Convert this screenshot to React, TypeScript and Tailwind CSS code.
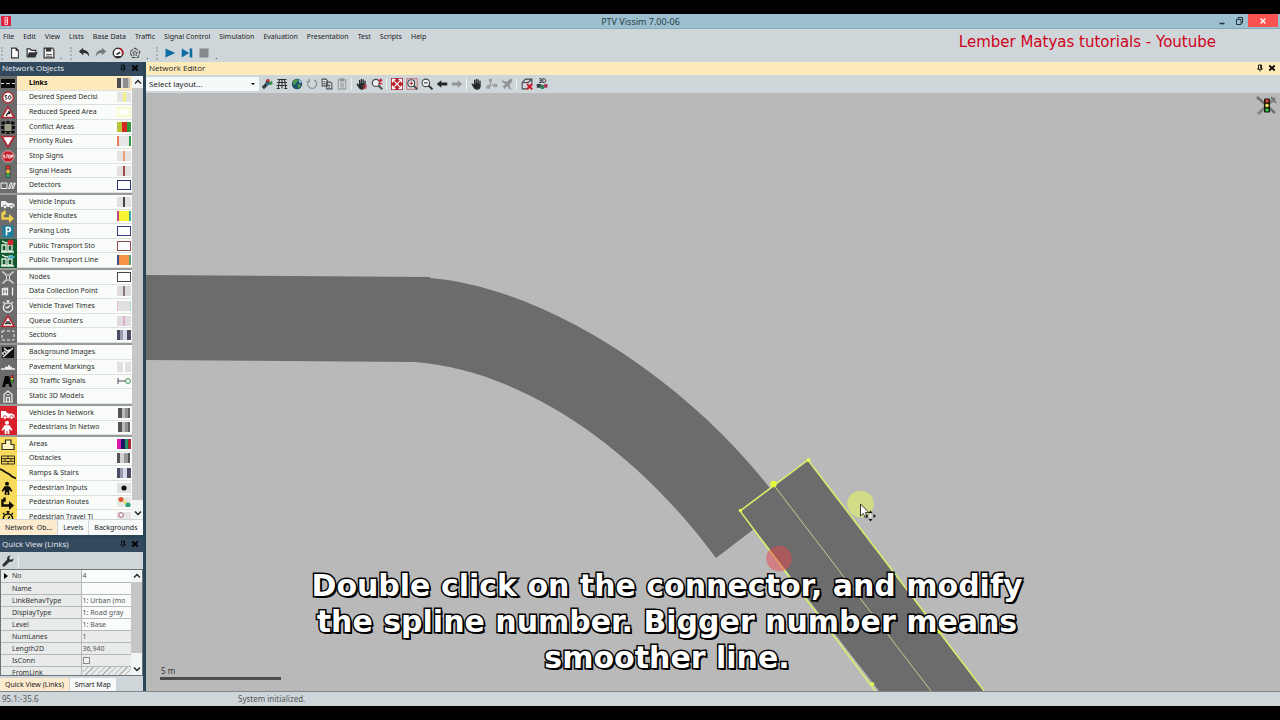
import React, { useState } from "react";

type IconProps = { name: string; className?: string };

const GLYPHS: Record<string, React.ReactNode> = {
  newFile: <path d="M3.500 1.500h6l3 3v10h-9zM9.500 1.500v3h3" fill="#fff" stroke="#333" strokeWidth="1.400" />,
  open: (
    <g>
      <path d="M1.500 13V2.500h4l1.500 2h6V7" fill="#fff" stroke="#333" strokeWidth="1.600" />
      <path d="M1 14 4 7h11.500l-3 7z" fill="#333" />
    </g>
  ),
  save: (
    <g>
      <path d="M1.500 1.500h11l2 2v11h-13z" fill="#f3f3f3" stroke="#333" strokeWidth="1.600" />
      <path d="M4 1.500h7V6H4z" fill="#333" />
      <path d="M4 10h8M4 12.300h8" stroke="#555" strokeWidth="1.200" />
    </g>
  ),
  undo: <path d="M1 6 7 1v3c5 0 8 3 8 9-2-4-4-5-8-5v3z" fill="#2f3336" />,
  redo: <path d="M15 6 9 1v3C4 4 1 7 1 13c2-4 4-5 8-5v3z" fill="#777c7f" />,
  gauge: (
    <g fill="none">
      <circle cx="8" cy="8" r="6.300" fill="#fff" stroke="#333" strokeWidth="2" />
      <path d="M10 2a6.300 6.300 0 0 1 4 8" stroke="#c01525" strokeWidth="2.200" />
      <path d="M4 13h8M6 10l5-3" stroke="#333" strokeWidth="2" />
    </g>
  ),
  star: (
    <g fill="none" stroke="#444">
      <path d="m8 1.500 6.500 4.800-2.500 7.700H4L1.500 6.300z" strokeWidth="1.500" strokeDasharray="5 1.500" />
      <path d="m8 5 1 2.200 2.400.2-1.800 1.600.6 2.400L8 10.200l-2.200 1.200.6-2.400-1.800-1.600L7 7.200z" strokeWidth="1" />
    </g>
  ),
  play: <path d="m2 2 13 6-13 6z" fill="#0d6da3" />,
  step: <path d="m1 2 10 6-10 6zM11.500 2H15v12h-3.500z" fill="#0d6da3" />,
  stop: <path d="M2 2h12v12H2z" fill="#858789" />,
  pin: <path d="M5 2h6v7h1.500v1.500h-9V9H5zM8 10v5M9.500 2v7" fill="none" stroke="currentColor" strokeWidth="1.800" />,
  close: <path d="m2.500 3 11 10m0-10-11 10" stroke="currentColor" strokeWidth="3.400" />,
  wrench: (
    <path d="M15 4.500 12 6.500 9.800 5 10 2 12.500.8C9 0 6 2.500 7 6L1 12.300a2 2 0 0 0 2.800 2.800L10 9c3.500.8 5.800-1.500 5-4.500z" fill="#2d3033" />
  ),
  wrenchColor: (
    <g>
      <path d="M15 4 12 6 10 4.500 10.500 2C8 1 6 3 6.500 6L1 12l3 3 6-6c3 .5 5.500-2 5-5z" fill="#33413c" />
      <circle cx="9.500" cy="3.500" r="2.300" fill="#b03a3a" />
      <circle cx="13" cy="7" r="2.300" fill="#2c9a4c" />
      <circle cx="8.500" cy="8" r="1.800" fill="#2c7ea8" />
    </g>
  ),
  net: (
    <path d="M2 2h12M1.500 6h13M1 10h14M4.500 2 3 14M8 2v12M11.500 2 13 14M1 14h4M11 14h4" stroke="#2f3133" strokeWidth="1.400" fill="none" />
  ),
  globe: (
    <g>
      <circle cx="8" cy="8" r="7" fill="#21506e" />
      <path d="M3 4c3-3 6-2 6 0s-3 2-3 4-3 1-4-1zM9 9c3-2 5 0 4 2s-4 3-4 0z" fill="#4f9b4f" />
      <path d="M10 2c3 1 4 3 4 5l-3-1z" fill="#a9cfe0" />
    </g>
  ),
  refresh: <path d="M11 2.500A6 6 0 1 1 4 3.500M4.500 1v4H.8" fill="none" stroke="#8d9295" strokeWidth="1.600" />,
  copy: (
    <g fill="#e9ecec" stroke="#45494c" strokeWidth="1.400">
      <path d="M1.500 1.500h5l2 2v7h-7zM7.500 5.500h5l2 2v7h-7z" />
      <path d="M3 5h3M3 7.500h3M9.500 9.500h3M9.500 12h3" />
    </g>
  ),
  paste: (
    <g fill="none" stroke="#96999b" strokeWidth="1.400">
      <path d="M3 2.500h10v12H3zM6 1h4v3H6zM5.500 7h5M5.500 9.500h5M5.500 12h5" />
    </g>
  ),
  hand: (
    <path d="M4 9V3.200c0-1 1.700-1 1.700 0V7h.6V1.800c0-1 1.800-1 1.800 0V7h.6V2.300c0-1 1.800-1 1.800 0V7.500h.6V4c0-1 1.800-1 1.800 0v7c0 3-2 4.500-4.800 4.500-2.700 0-4.200-1.500-5.200-3.500L.8 8.500c-.5-1 1-1.700 1.700-1z" fill="#26292b" />
  ),
  handRed: (
    <g>
      <path d="M4 9V3.200c0-1 1.700-1 1.700 0V7h.6V1.800c0-1 1.800-1 1.800 0V7h.6V2.300c0-1 1.800-1 1.800 0V7.500h.6V4c0-1 1.800-1 1.800 0v7c0 3-2 4.500-4.800 4.500-2.700 0-4.200-1.500-5.200-3.500L.8 8.500c-.5-1 1-1.700 1.700-1z" fill="#26292b" />
      <path d="M9 10.500h5m-1.500-1.500L14 10.500 12.500 12M14 13.500H9" fill="none" stroke="#c8434e" strokeWidth="1.500" />
    </g>
  ),
  zoomSync: (
    <g fill="none">
      <circle cx="6.500" cy="6.500" r="4.800" fill="#eef2f2" stroke="#44484a" strokeWidth="1.600" />
      <path d="m10 10 5 5" stroke="#44484a" strokeWidth="2.400" />
      <path d="M9 3h5m-2-2 2.500 2L12 5M15 7.500h-5" stroke="#c6222e" strokeWidth="1.500" />
    </g>
  ),
  fit: (
    <g>
      <path d="M0 0h16v16H0z" fill="#b3202b" />
      <path d="m2.500 2.500 11 11m0-11-11 11" stroke="#fff" strokeWidth="1.600" />
      <path d="M2 6V2h4M10 2h4v4M14 10v4h-4M6 14H2v-4" fill="none" stroke="#fff" strokeWidth="1.800" />
    </g>
  ),
  zoomIn: (
    <g fill="none">
      <path d="M1 1h14v14H1z" stroke="#c6626a" strokeWidth="1.200" />
      <circle cx="7" cy="7" r="4.600" fill="#eef2f2" stroke="#44484a" strokeWidth="1.500" />
      <path d="m10.500 10.500 4.500 4.500" stroke="#44484a" strokeWidth="2.400" />
      <path d="M4.500 7h5M7 4.500v5" stroke="#b3202b" strokeWidth="1.300" />
    </g>
  ),
  zoomOut: (
    <g fill="none">
      <circle cx="6.500" cy="6.500" r="5" fill="#eef2f2" stroke="#44484a" strokeWidth="1.500" />
      <path d="m10.200 10.200 5 5" stroke="#333" strokeWidth="2.600" />
      <path d="M4 6.500h5" stroke="#444" strokeWidth="1.500" />
    </g>
  ),
  back: <path d="m1 8 6-5v3h8v4H7v3z" fill="#24282a" />,
  forward: <path d="M15 8 9 3v3H1v4h8v3z" fill="#919598" />,
  axis: (
    <g fill="none" stroke="#96999b" strokeWidth="1.500">
      <path d="M6 2v7l-4 4M6 9l8 1" />
      <circle cx="6" cy="3" r="1.500" />
      <circle cx="3" cy="12" r="2" />
      <circle cx="12.500" cy="10" r="2" />
    </g>
  ),
  plane: (
    <g>
      <path d="M15 1 11 2 8 5 2 4 1 5l5 3-3 3-2 .5 3 1 1 3 .5-2 3-3 3 5 1-1-1-6 3-3z" fill="#8f9395" />
      <path d="m1 2 13 13" stroke="#8f9395" strokeWidth="1.200" />
    </g>
  ),
  cubeX: (
    <g fill="none">
      <path d="M1.500 6 6 1.500h8.500V8M1.500 6h8M1.500 6v8.500H8M9.500 6l5-4.500" stroke="#44484a" strokeWidth="1.400" />
      <path d="m8 8 7 7m0-7-7 7" stroke="#cc1b29" strokeWidth="2.600" />
    </g>
  ),
  view3d: (
    <g>
      <path d="M4 1h3v5H4M5 3.500h2M9 1h2c2.500 0 2.500 5 0 5H9z" fill="none" stroke="#333" strokeWidth="1.200" />
      <path d="M1 8h6v5H1z" fill="#3a3f4b" />
      <circle cx="8.500" cy="12" r="3" fill="#2f8a58" />
      <circle cx="13" cy="10.500" r="2.700" fill="#a83a5a" />
    </g>
  ),
};

function Icon({ name, className = "size-3" }: IconProps) {
  return (
    <svg viewBox="0 0 16 16" className={className} aria-hidden="true">
      {GLYPHS[name]}
    </svg>
  );
}

const P = "#efefef";

const OBJECT_GLYPHS: Record<string, React.ReactNode> = {
  links: (
    <g>
      <path d="M1 3h14v9H1z" fill="#0c0c0c" />
      <path d="M1 7.500h3m2 0h4m2 0h3" stroke="#ddd" />
    </g>
  ),
  speed: (
    <g>
      <circle cx="8" cy="7.500" r="5.400" fill="#fff" stroke="#b5323a" strokeWidth="1.500" />
      <path d="M7 5.500H5.300v1.600c2.400-.3 2.400 2.600 0 2.200M9.800 5.400c-1.600 0-1.600 4 0 4s1.600-4 0-4z" fill="none" stroke="#222" />
    </g>
  ),
  reduced: (
    <g>
      <path d="M8 1.800 14.300 12.500H1.700z" fill="#fff" stroke="#b02832" strokeWidth="1.600" />
      <path d="M6.500 11c0-2 1-3 3-3.500M8 6.500l2 .8-1.200 2" stroke="#111" strokeWidth="1.200" fill="none" />
    </g>
  ),
  conflict: (
    <g>
      <path d="M1.500 1.500H5v3H1.500zM6.500 1h3v3h-3zM11 1.500h3.500v3H11zM1 6h3v3H1zM12 6h3v3h-3zM1.500 10.500H5v3H1.500zM6.500 11h3v3h-3zM11 10.500h3.500v3H11z" fill="#0c0c0c" />
      <path d="M4 3.500h8v8H4z" fill="#98a08c" stroke="#222" />
    </g>
  ),
  priority: <path d="M1.800 2.500h12.400L8 13z" fill="#fff" stroke="#b02832" strokeWidth="1.700" />,
  stopSign: (
    <g>
      <path d="M5.500 2h5l3.500 3.300v4.400L10.500 13h-5L2 9.700V5.300z" fill="#c4202c" stroke="#eee" strokeWidth=".6" />
      <path d="M5 6H3.500v1.500H5V9H3.500M6 6h2M7 6v3M8.700 6h1.500v3H8.700zM11.500 9V6H13v1.500h-1.500" stroke="#fff" strokeWidth=".8" fill="none" />
    </g>
  ),
  signal: (
    <g>
      <path d="M5.500 1h5v13h-5z" fill="#444" />
      <circle cx="8" cy="3.500" r="1.900" fill="#cf2f2f" />
      <circle cx="8" cy="7.500" r="1.900" fill="#e2c63a" />
      <circle cx="8" cy="11.500" r="1.900" fill="#30a54c" />
    </g>
  ),
  detectors: <path d="M1 5h6v5.500H1zM8.500 10.500l2-5.500H12l-2 5.500zM11.800 10.500l2-5.500h1.500l-2 5.500z" fill="none" stroke={P} />,
  car: (
    <g>
      <path d="M1 6h4.500L8 8h4l2.500 1.500V12H1z" fill={P} />
      <circle cx="5" cy="12" r="1.800" fill={P} stroke="#666" strokeWidth=".7" />
      <circle cx="11.500" cy="12" r="1.800" fill={P} stroke="#666" strokeWidth=".7" />
    </g>
  ),
  route: (
    <g>
      <path d="M4.500 1.500v3H2.500v5H10" fill="none" stroke="#f0cf4e" strokeWidth="2.400" />
      <path d="m9 5 5 4.500L9 14z" fill="#f0cf4e" />
    </g>
  ),
  parking: (
    <g>
      <path d="M2.500 1.500h11v12h-11z" fill="#1d7f9d" />
      <path d="M6.500 11.500v-8h2c2.500 0 2.500 4 0 4h-2" fill="none" stroke="#fff" strokeWidth="1.600" />
    </g>
  ),
  ptStop: (
    <g>
      <path d="M2 2l4 2 5-1M2 6h4v6H2zM8 6h4v6H8zM1 13h13" fill="none" stroke="#e4efe4" strokeWidth="1.300" />
      <circle cx="10.500" cy="3.500" r="3" fill="#c82a2d" />
    </g>
  ),
  ptLine: (
    <g>
      <path d="M2 2l4 2 5-1M2 6h4v6H2zM8 6h4v6H8zM1 13h13" fill="none" stroke="#e4efe4" strokeWidth="1.300" />
      <path d="M8 4h5m-2-2 3 2-3 2" fill="none" stroke="#4fb4cb" strokeWidth="1.300" />
    </g>
  ),
  nodes: <path d="M2 1.500 6.500 6v3L2 13.500M14 1.500 9.500 6v3l4.500 4.500M3 1.500 7 5h2l4-3.500M3 13.500 7 10h2l4 3.500" fill="none" stroke={P} strokeWidth=".9" />,
  dataPoint: <path d="M2.500 4v7.500M5 3.500v8M7.500 3.500v8M2 5h6M2 10h6M12.500 3.500v8" stroke={P} strokeWidth="1.300" />,
  timer: (
    <g fill="none" stroke={P} strokeWidth="1.300">
      <circle cx="8" cy="8.500" r="4.600" />
      <path d="M6.500 1.800h3M8 2v2M3 3l1.500 1.500M13 3l-1.500 1.500M8 8.500l2-2M5.500 8.500H8" />
    </g>
  ),
  queue: (
    <g>
      <path d="M8 1.800 14.300 12.500H1.700z" fill="#fff" stroke="#b02832" strokeWidth="1.600" />
      <path d="M5 9.500h6M6 7.800h4" stroke="#333" strokeWidth="1.300" />
    </g>
  ),
  sections: <path d="M2 3h12v9H2z" fill="none" stroke={P} strokeDasharray="3 2" />,
  background: (
    <g>
      <path d="M2 2h12v11H2z" fill="#111" />
      <path d="M3 12 13 3M4 3l3 3 3-1M4 6l2 2M3 10V7" stroke="#eee" strokeWidth="1.500" fill="none" />
    </g>
  ),
  pavement: <path d="M1 9h14M5 7.500h7M9 5v3" stroke={P} strokeWidth="1.700" />,
  signal3d: (
    <g>
      <path d="M5 2h4l3 11H9.500l-.8-3H6l-.8 3H2z" fill="#080808" />
      <path d="M10.500 1h3v8h-3z" fill="#2b2b2b" />
      <circle cx="12" cy="2.400" r="1.200" fill="#d33" />
      <circle cx="12" cy="5" r="1.200" fill="#dc3" />
      <circle cx="12" cy="7.600" r="1.200" fill="#3a4" />
    </g>
  ),
  house: <path d="M4 13V5.500L8 2l4 3.500V13zM6.500 13V8.500h3V13M6.500 6h3" fill="none" stroke={P} strokeWidth="1.200" />,
  carRed: (
    <g>
      <path d="M1 5h4.500L8 7.500h4l2.500 1.500v3H1z" fill="#fff" />
      <circle cx="5" cy="11.500" r="1.800" fill="#fff" stroke="#d8202c" strokeWidth=".8" />
      <circle cx="11.500" cy="11.500" r="1.800" fill="#fff" stroke="#d8202c" strokeWidth=".8" />
    </g>
  ),
  personWhite: (
    <g fill="#fff">
      <circle cx="7" cy="2.800" r="2" />
      <path d="M4.500 5.300h5L12.500 10l-1.300.8L9.300 8.500V14H7.500v-3h-1v3H4.700V8.500l-1.900 2.300L1.500 10z" />
    </g>
  ),
  area: <path d="M2 12.500v-6h3.500V3H11v4.500h3v5z" fill="#fdf3c4" stroke="#33301e" strokeWidth="1.200" />,
  brick: <path d="M1.500 4h13v8h-13zM1.500 6.600h13M1.500 9.300h13M8 4v2.600M5 6.600v2.700M11 6.600v2.700M8 9.300V12" fill="none" stroke="#33301e" />,
  ramp: <path d="m0 3 3 1.500 3 2 3 1.500 3 2.500 4 2" fill="none" stroke="#15130a" strokeWidth="1.800" />,
  person: (
    <g fill="#0d0c06">
      <circle cx="7" cy="2.800" r="2" />
      <path d="M4.500 5.300h5L12.500 10l-1.300.8L9.300 8.500V14H7.500v-3h-1v3H4.700V8.500l-1.900 2.300L1.500 10z" />
    </g>
  ),
  pedRoute: (
    <g>
      <path d="M4.500 1.500v3H2.500v5H10" fill="none" stroke="#0d0c06" strokeWidth="2.400" />
      <path d="m9 5 5 4.500L9 14z" fill="#0d0c06" />
    </g>
  ),
  pedTimer: (
    <g fill="none" stroke="#0d0c06" strokeWidth="1.500">
      <circle cx="8" cy="8.500" r="4.600" />
      <path d="M6.500 1.800h3M8 2v2M3 3l1.500 1.500M13 3l-1.500 1.500M8 8.500l2-2" />
    </g>
  ),
};

const bars = (...list: [number, number, string][]) => list.map(([x, w, c], i) => <rect key={i} x={x} y="0" width={w} height="10" fill={c} />);
const frame = (c: string) => <rect x=".5" y=".5" width="13" height="9" fill="#fcfdff" stroke={c} />;

const SWATCHES: Record<string, React.ReactNode> = {
  links: bars([0, 4, "#4b4b4b"], [4, 2, "#dcdcdc"], [6, 5, "#8d8d8d"], [11, 2, "#c0c0c0"]),
  speed: bars([0, 14, "#e4e4e0"], [6, 3, "#eff08a"]),
  reduced: <rect x="1" y="1" width="12" height="8" fill="#fffffa" stroke="#f8f8b8" strokeWidth="1.500" />,
  conflict: bars([0, 5, "#b9c43a"], [5, 5, "#d32a20"], [10, 4, "#2c9a3d"]),
  priority: bars([0, 14, "#e6e6e6"], [0, 2, "#e8795d"], [12, 2, "#2f9a48"]),
  stopSign: bars([0, 14, "#e6e4e2"], [6, 2, "#ee9d75"]),
  signal: bars([0, 14, "#e4e0e0"], [6, 2, "#9e4a4f"]),
  detectors: frame("#2c3370"),
  inputs: bars([0, 14, "#e0e0e0"], [6, 2, "#444"]),
  routes: bars([0, 2, "#c4487f"], [2, 10, "#f7f531"], [12, 2, "#3fa890"]),
  parking: frame("#3a3a86"),
  ptStop: frame("#8a4c50"),
  ptLine: bars([0, 2, "#44488d"], [2, 10, "#f79443"], [12, 2, "#5a9c7c"]),
  nodes: frame("#4a4348"),
  dataPoint: bars([0, 14, "#e0dcdc"], [6, 2, "#86777b"]),
  travel: bars([0, 14, "#e0e0e0"], [0, 1, "#f0bcc8"], [13, 1, "#a9dcc6"]),
  queue: bars([0, 14, "#e2dce0"], [6, 2, "#dfaecb"]),
  sections: bars([0, 14, "#4b4c62"], [3, 3, "#9a9bb0"], [6, 4, "#d7d8e2"]),
  pavement: bars([0, 6, "#e0e0e0"], [8, 6, "#e0e0e0"]),
  signal3d: (
    <g fill="none">
      <path d="M1 2v6M1 5h8" stroke="#5a4660" />
      <circle cx="11" cy="5" r="2.500" stroke="#3a9a58" />
    </g>
  ),
  vehicles: bars([1, 4, "#555"], [5, 3, "#b9b9b9"], [8, 3, "#8f8f8f"], [11, 2, "#5e5e5e"]),
  areas: bars([0, 4, "#d817b0"], [4, 4, "#1d1560"], [8, 3, "#1f9060"], [11, 3, "#a02630"]),
  obstacles: bars([0, 3, "#555"], [3, 4, "#d2d2d2"], [7, 4, "#9a9a9a"], [11, 2, "#555"]),
  pedInput: (
    <g>
      {bars([0, 14, "#e0e2e0"])}
      <circle cx="7" cy="5" r="2.600" fill="#111" />
    </g>
  ),
  pedRoute: (
    <g>
      {bars([0, 14, "#e8e8e2"])}
      <circle cx="4" cy="2.500" r="2.500" fill="#e2592c" />
      <circle cx="8" cy="5" r="1.500" fill="#f0df62" />
      <circle cx="11" cy="8" r="2.500" fill="#28a080" />
    </g>
  ),
  pedTravel: (
    <g>
      {bars([0, 14, "#e8e4e4"])}
      <circle cx="4" cy="3" r="2.300" fill="#fff" stroke="#a0586a" />
    </g>
  ),
};

type Row = [label: string, icon: string, swatch: string, tone: string];
const GRAY = "bg-[#6c6c6c]";
const GREEN = "bg-[#12592c]";
const RED = "bg-[#d8202c]";
const YELLOW = "bg-[#f8da5c]";

const GROUPS: { height: string; rows: Row[] }[] = [
  {
    height: "h-[117px]",
    rows: [
      ["Links", "links", "links", GRAY],
      ["Desired Speed Decisi", "speed", "speed", GRAY],
      ["Reduced Speed Area", "reduced", "reduced", GRAY],
      ["Conflict Areas", "conflict", "conflict", GRAY],
      ["Priority Rules", "priority", "priority", GRAY],
      ["Stop Signs", "stopSign", "stopSign", GRAY],
      ["Signal Heads", "signal", "signal", GRAY],
      ["Detectors", "detectors", "detectors", GRAY],
    ],
  },
  {
    height: "h-[73px]",
    rows: [
      ["Vehicle Inputs", "car", "inputs", GRAY],
      ["Vehicle Routes", "route", "routes", GRAY],
      ["Parking Lots", "parking", "parking", GRAY],
      ["Public Transport Sto", "ptStop", "ptStop", GREEN],
      ["Public Transport Line", "ptLine", "ptLine", GREEN],
    ],
  },
  {
    height: "h-[73px]",
    rows: [
      ["Nodes", "nodes", "nodes", GRAY],
      ["Data Collection Point", "dataPoint", "dataPoint", GRAY],
      ["Vehicle Travel Times", "timer", "travel", GRAY],
      ["Queue Counters", "queue", "queue", GRAY],
      ["Sections", "sections", "sections", GRAY],
    ],
  },
  {
    height: "h-[59px]",
    rows: [
      ["Background Images", "background", "", GRAY],
      ["Pavement Markings", "pavement", "pavement", GRAY],
      ["3D Traffic Signals", "signal3d", "signal3d", GRAY],
      ["Static 3D Models", "house", "", GRAY],
    ],
  },
  {
    height: "h-[29px]",
    rows: [
      ["Vehicles In Network", "carRed", "vehicles", RED],
      ["Pedestrians In Netwo", "personWhite", "vehicles", RED],
    ],
  },
  {
    height: "h-[88px]",
    rows: [
      ["Areas", "area", "areas", YELLOW],
      ["Obstacles", "brick", "obstacles", YELLOW],
      ["Ramps & Stairs", "ramp", "sections", YELLOW],
      ["Pedestrian Inputs", "person", "pedInput", YELLOW],
      ["Pedestrian Routes", "pedRoute", "pedRoute", YELLOW],
      ["Pedestrian Travel Ti", "pedTimer", "pedTravel", YELLOW],
    ],
  },
];

const MENUS = ["File", "Edit", "View", "Lists", "Base Data", "Traffic", "Signal Control", "Simulation", "Evaluation", "Presentation", "Test", "Scripts", "Help"];

const EDITOR_TOOLS: [string, string][][] = [
  [["wrenchColor", "Edit graphic parameters"], ["net", "Toggle wireframe"], ["globe", "Background map"], ["refresh", "Refresh"], ["copy", "Copy"], ["paste", "Paste"]],
  [["handRed", "Synchronized selection"], ["zoomSync", "Synchronized zoom"]],
  [["fit", "Show entire network"], ["zoomIn", "Zoom in"], ["zoomOut", "Zoom out"], ["back", "Previous view"], ["forward", "Next view"]],
  [["hand", "Pan"], ["axis", "Rotate"], ["plane", "Fly"]],
  [["cubeX", "Remove 3D"], ["view3d", "3D mode"]],
];

function PanelHeader({ title }: { title: string }) {
  return (
    <header className="flex h-3.5 shrink-0 items-start gap-1 bg-[#33495d] pr-1 pl-0.5 text-[#e9eef2]">
      <h2 className="flex-1 font-['Open_Sans',sans-serif] text-[8px] leading-[12px]">{title}</h2>
      <button type="button" aria-label={`Pin ${title}`} className="pt-0.5 text-[#0c1218]">
        <Icon name="pin" className="size-2" />
      </button>
      <button type="button" aria-label={`Close ${title}`} className="pt-0.5 text-black">
        <Icon name="close" className="size-2" />
      </button>
    </header>
  );
}

function ScrollRail({ thumb }: { thumb: string }) {
  return (
    <div className="flex w-[11px] shrink-0 flex-col items-center bg-[#f2f5f5] text-[#222]" aria-hidden="true">
      <svg viewBox="0 0 10 12" className="h-3 w-2.5">
        <path d="m2 7.500 3-3 3 3" fill="none" stroke="currentColor" strokeWidth="1.400" />
      </svg>
      <div className={`w-full bg-[#c6c6c6] ${thumb}`} />
      <div className="flex-1" />
      <svg viewBox="0 0 10 12" className="h-3 w-2.5">
        <path d="m2 4.500 3 3 3-3" fill="none" stroke="currentColor" strokeWidth="1.400" />
      </svg>
    </div>
  );
}

function ObjectRow({ row, selected, onSelect }: { row: Row; selected: boolean; onSelect: () => void }) {
  const [label, icon, swatch, tone] = row;
  return (
    <button type="button" onClick={onSelect} className="flex min-h-0 items-stretch overflow-hidden text-left">
      <span className={`flex w-[17px] shrink-0 items-center overflow-hidden ${tone}`}>
        <svg viewBox="0 0 16 15" className="h-[15px] w-4" aria-hidden="true">
          {OBJECT_GLYPHS[icon]}
        </svg>
      </span>
      <span
        className={`flex min-w-0 flex-1 items-center border-b border-[#dde1dd] pr-px pl-3 ${
          selected ? "bg-[#fee9bd] font-bold text-black" : "bg-[#f9fcf9] text-[#2c2c2c]"
        }`}
      >
        <span className="flex-1 whitespace-nowrap">{label}</span>
        {swatch && (
          <svg viewBox="0 0 14 10" className="h-2.5 w-3.5 shrink-0" aria-hidden="true">
            {SWATCHES[swatch]}
          </svg>
        )}
      </span>
    </button>
  );
}

function Tab({ label, active = false }: { label: string; active?: boolean }) {
  return (
    <button type="button" className={`h-full px-[5px] whitespace-pre ${active ? "bg-[#fdebcf]" : "bg-[#f8faf9]"}`}>
      {label}
    </button>
  );
}

function NetworkObjects() {
  const [selected, setSelected] = useState("Links");
  return (
    <section className="flex min-h-0 flex-1 flex-col">
      <PanelHeader title="Network Objects" />
      <div className="flex min-h-0 flex-1 overflow-hidden bg-[#c6c6c6]">
        <div className="flex h-0 min-h-full min-w-0 flex-1 flex-col gap-0.5 overflow-hidden bg-[#999b9b]">
          {GROUPS.map((g) => (
            <div key={g.rows[0][0]} className={`grid shrink-0 auto-rows-fr ${g.height}`}>
              {g.rows.map((r) => (
                <ObjectRow key={r[0]} row={r} selected={selected === r[0]} onSelect={() => setSelected(r[0])} />
              ))}
            </div>
          ))}
        </div>
        <ScrollRail thumb="h-[412px]" />
      </div>
      <nav className="flex h-4 shrink-0 items-stretch gap-px bg-[#cfd6da] pt-px text-[#222]" aria-label="Network objects tabs">
        <Tab label="Network  Ob..." active />
        <Tab label="Levels" />
        <Tab label="Backgrounds" />
      </nav>
    </section>
  );
}

const ATTRIBUTES: [string, string][] = [
  ["No", "4"],
  ["Name", ""],
  ["LinkBehavType", "1: Urban (mo"],
  ["DisplayType", "1: Road gray"],
  ["Level", "1: Base"],
  ["NumLanes", "1"],
  ["Length2D", "36,940"],
  ["IsConn", ""],
  ["FromLink", ""],
];

function QuickView() {
  return (
    <section className="flex shrink-0 flex-col bg-[#cfd6da]">
      <PanelHeader title="Quick View (Links)" />
      <div className="flex h-[17px] items-center gap-1 pl-0.5">
        <button type="button" aria-label="Attribute selection">
          <Icon name="wrench" />
        </button>
        <span className="h-3 w-px bg-[#eef1f2]" />
      </div>
      <div className="flex h-[107px] overflow-hidden border border-[#6e7478] bg-[#f2f5f5]">
        <table className="h-[108px] flex-1 table-fixed border-collapse text-[#333]">
          <tbody>
            {ATTRIBUTES.map(([name, value], i) => (
              <tr key={name} className="h-3">
                <th scope="row" className="w-[80px] border-r border-b border-[#b4b8b8] bg-[#e9ebeb] p-0 text-left font-normal">
                  <span className="flex h-[11px] items-center leading-[11px]">
                    <span className="w-[11px] pl-[3px] text-black">
                      {i === 0 && (
                        <svg viewBox="0 0 4 6" className="h-1.5 w-1" aria-hidden="true">
                          <path d="m0 0 4 3-4 3z" />
                        </svg>
                      )}
                    </span>
                    {name}
                  </span>
                </th>
                <td className={`overflow-hidden border-b border-[#b4b8b8] p-0 pl-px leading-[11px] whitespace-nowrap text-[#555] ${i < 5 ? "bg-[#fafcfb]" : "bg-[#e9ebeb]"}`}>
                  {name === "IsConn" ? (
                    <input type="checkbox" aria-label="IsConn" className="block size-[7px] appearance-none border border-[#888] bg-[#f0f0f0]" />
                  ) : name === "FromLink" ? (
                    <span className="block h-[11px] bg-[repeating-linear-gradient(135deg,#e9ebeb_0px,#e9ebeb_3px,#b4b6b6_3px,#b4b6b6_4px)]" />
                  ) : (
                    value
                  )}
                </td>
              </tr>
            ))}
          </tbody>
        </table>
        <ScrollRail thumb="h-[71px]" />
      </div>
      <nav className="flex h-[15px] items-stretch gap-px pt-0.5 text-[#222]" aria-label="Quick view tabs">
        <Tab label="Quick View (Links)" active />
        <Tab label="Smart Map" />
      </nav>
    </section>
  );
}

function Canvas() {
  return (
    <div className="relative min-h-[400px] flex-1 overflow-hidden bg-[#b9b9b9]">
      <svg viewBox="146 93 1134 598" preserveAspectRatio="xMinYMin slice" className="absolute inset-0 size-full" role="img" aria-label="Road network with selected link">
        <path d="M146 275 430 277V278C540 287 680 374 769 487L775 494 754 529 716 558C633 445 520 370 415 362L146 360Z" fill="#6c6c6c" />
        <path d="M740 511 808 460 984 691 879 691Z" fill="#6c6c6c" />
        <path d="M879 696 740 511 808 460 988 696" fill="none" stroke="#dcf06a" strokeWidth="1.500" />
        <path d="M773 484 931 691" stroke="#c6cb93" />
        <circle cx="773.500" cy="484" r="3.200" fill="#e4fb3c" />
        <circle cx="740.500" cy="510.500" r="1.800" fill="#e4fb5c" />
        <circle cx="808.500" cy="460" r="2" fill="#e4fb5c" />
        <circle cx="872.500" cy="684" r="1.800" fill="#e4fb3c" />
        <circle cx="939.500" cy="632" r="1.800" fill="#e4fb3c" />
        <circle cx="779" cy="558.500" r="12.800" fill="#e8474c" fillOpacity=".5" />
        <circle cx="860.500" cy="504" r="13.300" fill="#dbe877" fillOpacity=".75" />
        <path d="M860.500 504v12l2.800-2.600 2 4.400 2-1-2-4.200h3.700z" fill="#fff" stroke="#222" strokeWidth=".9" />
        <path d="M868.500 513h4l-2-2.500zM868.500 519h4l-2 2.500zM867.500 514v4l-2.500-2zM873.500 514v4l2.500-2z" fill="#111" />
        <path d="M870.500 514v4M868.500 516h4" stroke="#eee" />
        <g>
          <path d="m1257 97 18 16M1258 114l17-16" stroke="#6e6e6e" strokeWidth="2.500" />
          <path d="m1258 114 17-16" stroke="#b9b9b9" strokeWidth=".7" />
          <path d="m1271 97 5 6" stroke="#6e6e6e" strokeWidth="1.500" />
          <rect x="1264" y="98.500" width="6" height="14" rx="1" fill="#15190f" />
          <circle cx="1267" cy="101" r="1.800" fill="#e03a2c" />
          <circle cx="1267" cy="105.500" r="1.800" fill="#f1e05a" />
          <circle cx="1267" cy="110" r="1.800" fill="#35c04e" />
        </g>
      </svg>
      <div className="absolute bottom-[11px] left-3.5 w-[121px] text-[8px] text-[#333]">
        <p className="pl-px leading-[12px]">5 m</p>
        <div className="h-[3px] bg-[#4c4c4c]" />
      </div>
      <p className="absolute bottom-[15px] left-1/2 w-[740px] -translate-x-[416px] text-center font-['DejaVu_Sans',sans-serif] text-[30px] leading-[36px] font-bold text-white [paint-order:stroke_fill] [-webkit-text-stroke:3px_#000] [text-shadow:2px_2px_0_#000]">
        Double click on the connector, and modify the spline number. Bigger number means smoother line.
      </p>
    </div>
  );
}

function ToolGroup({ tools }: { tools: [string, string][] }) {
  return (
    <div className="flex items-center gap-[5px]">
      <span className="mr-px h-[13px] border-l-2 border-dotted border-[#a9afb2]" />
      {tools.map(([icon, label]) => (
        <button key={icon} type="button" aria-label={label}>
          <Icon name={icon} />
        </button>
      ))}
      <span className="self-end text-[8px] leading-none">.</span>
    </div>
  );
}

export default function App() {
  return (
    <div className="flex h-screen min-h-[600px] flex-col bg-black py-3.5 font-['Noto_Sans',sans-serif] text-[7px] leading-[10px] text-[#222]">
      <header className="flex h-[15px] shrink-0 items-start border-b border-[#8aa9bd] bg-[#9cc0d0]">
        <div className="flex h-full flex-1 items-center pl-px">
          <svg viewBox="0 0 10 10" className="size-2.5" aria-hidden="true">
            <rect width="10" height="10" fill="#e02440" />
            <path d="M4 1.500h2.500v7H4zM4 4h2.500M4 6h2.500" fill="none" stroke="#f6cdd2" />
          </svg>
        </div>
        <h1 className="text-[9px] leading-[15px] text-[#2a3c46]">PTV Vissim 7.00-06</h1>
        <div className="flex h-[13px] flex-1 items-center justify-end">
          <button type="button" aria-label="Minimize" className="px-1 text-[#27343b]">
            <svg viewBox="0 0 10 10" className="size-2.5"><path d="M2.500 7.500h5" stroke="currentColor" strokeWidth="1.600" /></svg>
          </button>
          <button type="button" aria-label="Restore" className="pr-1 pl-[3px] text-[#27343b]">
            <svg viewBox="0 0 10 10" className="size-2.5"><path d="M2.500 3.500H7v5H2.500zM4 3V1.500h4.500V7H7" fill="none" stroke="currentColor" strokeWidth="1" /></svg>
          </button>
          <button type="button" aria-label="Close" className="mr-0.5 flex h-full w-[30px] items-center justify-center bg-[#fb5252] text-white">
            <svg viewBox="0 0 10 10" className="size-2"><path d="m2 2 6 6m0-6-6 6" stroke="currentColor" strokeWidth="1.700" /></svg>
          </button>
        </div>
      </header>

      <div className="flex h-[33px] shrink-0 items-center justify-between bg-[#cfd6da]">
        <div className="flex h-full flex-col">
          <nav className="flex h-[15px] items-center gap-[9px] pl-[3px]" aria-label="Main menu">
            {MENUS.map((m) => (
              <button key={m} type="button" className="whitespace-nowrap">{m}</button>
            ))}
          </nav>
          <div className="flex h-[18px] items-center gap-2 pl-px">
            <ToolGroup tools={[["newFile", "New"], ["open", "Open"], ["save", "Save"]]} />
            <ToolGroup tools={[["undo", "Undo"], ["redo", "Redo"], ["gauge", "Quick mode"], ["star", "Simple network display"]]} />
            <ToolGroup tools={[["play", "Simulation continuous"], ["step", "Simulation single step"], ["stop", "Stop simulation"]]} />
          </div>
        </div>
        <p className="mr-16 pb-2 font-['DejaVu_Sans',sans-serif] text-[15px] leading-[22px] text-[#d0021b]">Lember Matyas tutorials - Youtube</p>
      </div>

      <div className="flex min-h-0 flex-1">
        <aside className="flex w-[146px] shrink-0 flex-col gap-[3px] border-r-2 border-[#2b4557] bg-[#2b4557] pr-px">
          <NetworkObjects />
          <QuickView />
        </aside>
        <main className="flex min-w-0 flex-1 flex-col">
          <header className="flex h-[13px] shrink-0 items-start gap-1 bg-[#feebba] pr-1 pl-[3px]">
            <h2 className="flex-1 font-['Open_Sans',sans-serif] text-[8px] leading-[12px]">Network Editor</h2>
            <button type="button" aria-label="Pin Network Editor" className="pt-0.5 text-black"><Icon name="pin" className="size-2" /></button>
            <button type="button" aria-label="Close Network Editor" className="pt-0.5 text-black"><Icon name="close" className="size-2" /></button>
          </header>
          <div className="flex h-[18px] shrink-0 items-center bg-[#cfd6da]">
            <div className="relative h-3.5 w-[113px]">
              <select aria-label="Layout" className="h-full w-full appearance-none bg-[#f6f9f9] pl-[3px] font-['Open_Sans',sans-serif] text-[8px] leading-[14px] text-[#111]">
                <option>Select layout...</option>
              </select>
              <svg viewBox="0 0 4 2" className="pointer-events-none absolute top-1.5 right-1 h-0.5 w-1" aria-hidden="true">
                <path d="M0 0h4L2 2z" />
              </svg>
            </div>
            <div className="flex items-center">
              {EDITOR_TOOLS.map((group, i) => (
                <div key={i} className={`flex items-center ${i > 0 ? "ml-0.5 border-l border-[#eef1f2] pl-0.5" : ""}`}>
                  {group.map(([icon, label]) => (
                    <button key={icon} type="button" aria-label={label} className="flex w-[15px] justify-center">
                      <Icon name={icon} />
                    </button>
                  ))}
                </div>
              ))}
            </div>
          </div>
          <Canvas />
        </main>
      </div>

      <footer className="flex h-[15px] shrink-0 items-center border-t border-[#7d868b] bg-[#cfd6da] pl-0.5 text-[8px] text-[#555]">
        <span className="w-[236px]">95.1:-35.6</span>
        <span>System initialized.</span>
      </footer>
    </div>
  );
}
